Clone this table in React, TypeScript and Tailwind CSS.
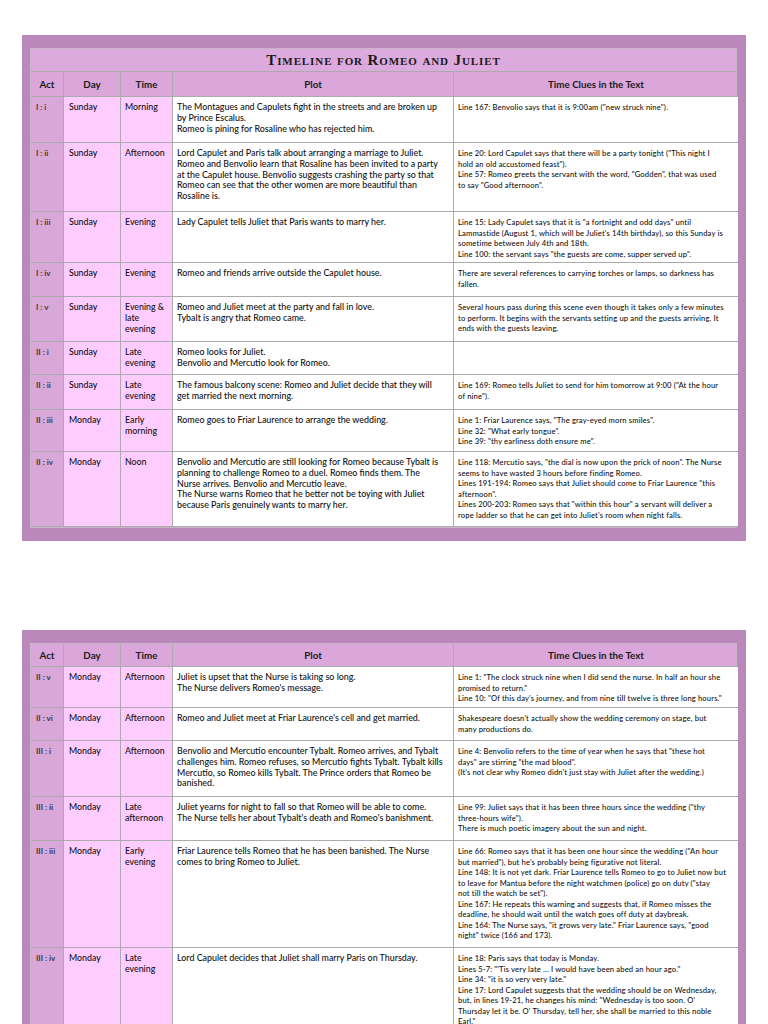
type Row = {
  act: string
  day: string
  time: string[]
  plot: string[]
  clues: string[]
  h: string
}

const pageOne: Row[] = [
  {
    act: "I : i",
    day: "Sunday",
    time: ["Morning"],
    plot: [
      "The Montagues and Capulets fight in the streets and are broken up",
      "by Prince Escalus.",
      "Romeo is pining for Rosaline who has rejected him.",
    ],
    clues: ['Line 167: Benvolio says that it is 9:00am ("new struck nine").'],
    h: "h-[46px]",
  },
  {
    act: "I : ii",
    day: "Sunday",
    time: ["Afternoon"],
    plot: [
      "Lord Capulet and Paris talk about arranging a marriage to Juliet.",
      "Romeo and Benvolio learn that Rosaline has been invited to a party",
      "at the Capulet house. Benvolio suggests crashing the party so that",
      "Romeo can see that the other women are more beautiful than",
      "Rosaline is.",
    ],
    clues: [
      'Line 20: Lord Capulet says that there will be a party tonight ("This night I',
      'hold an old accustomed feast").',
      'Line 57: Romeo greets the servant with the word, "Godden", that was used',
      'to say "Good afternoon".',
    ],
    h: "h-[69px]",
  },
  {
    act: "I : iii",
    day: "Sunday",
    time: ["Evening"],
    plot: ["Lady Capulet tells Juliet that Paris wants to marry her."],
    clues: [
      'Line 15: Lady Capulet says that it is "a fortnight and odd days" until',
      "Lammastide (August 1, which will be Juliet's 14th birthday), so this Sunday is",
      "sometime between July 4th and 18th.",
      'Line 100: the servant says "the guests are come, supper served up".',
    ],
    h: "h-[51px]",
  },
  {
    act: "I : iv",
    day: "Sunday",
    time: ["Evening"],
    plot: ["Romeo and friends arrive outside the Capulet house."],
    clues: [
      "There are several references to carrying torches or lamps, so darkness has",
      "fallen.",
    ],
    h: "h-[34px]",
  },
  {
    act: "I : v",
    day: "Sunday",
    time: ["Evening &", "late", "evening"],
    plot: [
      "Romeo and Juliet meet at the party and fall in love.",
      "Tybalt is angry that Romeo came.",
    ],
    clues: [
      "Several hours pass during this scene even though it takes only a few minutes",
      "to perform. It begins with the servants setting up and the guests arriving. It",
      "ends with the guests leaving.",
    ],
    h: "h-[45px]",
  },
  {
    act: "II : i",
    day: "Sunday",
    time: ["Late", "evening"],
    plot: ["Romeo looks for Juliet.", "Benvolio and Mercutio look for Romeo."],
    clues: [],
    h: "h-[33px]",
  },
  {
    act: "II : ii",
    day: "Sunday",
    time: ["Late", "evening"],
    plot: [
      "The famous balcony scene: Romeo and Juliet decide that they will",
      "get married the next morning.",
    ],
    clues: [
      'Line 169: Romeo tells Juliet to send for him tomorrow at 9:00 ("At the hour',
      'of nine").',
    ],
    h: "h-[35px]",
  },
  {
    act: "II : iii",
    day: "Monday",
    time: ["Early", "morning"],
    plot: ["Romeo goes to Friar Laurence to arrange the wedding."],
    clues: [
      'Line 1: Friar Laurence says, "The gray-eyed morn smiles".',
      'Line 32: "What early tongue".',
      'Line 39: "thy earliness doth ensure me".',
    ],
    h: "h-[42px]",
  },
  {
    act: "II : iv",
    day: "Monday",
    time: ["Noon"],
    plot: [
      "Benvolio and Mercutio are still looking for Romeo because Tybalt is",
      "planning to challenge Romeo to a duel. Romeo finds them. The",
      "Nurse arrives. Benvolio and Mercutio leave.",
      "The Nurse warns Romeo that he better not be toying with Juliet",
      "because Paris genuinely wants to marry her.",
    ],
    clues: [
      'Line 118: Mercutio says, "the dial is now upon the prick of noon". The Nurse',
      "seems to have wasted 3 hours before finding Romeo.",
      'Lines 191-194: Romeo says that Juliet should come to Friar Laurence "this',
      'afternoon".',
      'Lines 200-203: Romeo says that "within this hour" a servant will deliver a',
      "rope ladder so that he can get into Juliet's room when night falls.",
    ],
    h: "h-[75px]",
  },
]

const pageTwo: Row[] = [
  {
    act: "II : v",
    day: "Monday",
    time: ["Afternoon"],
    plot: [
      "Juliet is upset that the Nurse is taking so long.",
      "The Nurse delivers Romeo's message.",
    ],
    clues: [
      'Line 1: "The clock struck nine when I did send the nurse. In half an hour she',
      'promised to return."',
      'Line 10: "Of this day\'s journey, and from nine till twelve is three long hours."',
    ],
    h: "h-[41px]",
  },
  {
    act: "II : vi",
    day: "Monday",
    time: ["Afternoon"],
    plot: ["Romeo and Juliet meet at Friar Laurence's cell and get married."],
    clues: [
      "Shakespeare doesn't actually show the wedding ceremony on stage, but",
      "many productions do.",
    ],
    h: "h-[33px]",
  },
  {
    act: "III : i",
    day: "Monday",
    time: ["Afternoon"],
    plot: [
      "Benvolio and Mercutio encounter Tybalt. Romeo arrives, and Tybalt",
      "challenges him. Romeo refuses, so Mercutio fights Tybalt. Tybalt kills",
      "Mercutio, so Romeo kills Tybalt. The Prince orders that Romeo be",
      "banished.",
    ],
    clues: [
      'Line 4: Benvolio refers to the time of year when he says that "these hot',
      'days" are stirring "the mad blood".',
      "(It's not clear why Romeo didn't just stay with Juliet after the wedding.)",
    ],
    h: "h-[56px]",
  },
  {
    act: "III : ii",
    day: "Monday",
    time: ["Late", "afternoon"],
    plot: [
      "Juliet yearns for night to fall so that Romeo will be able to come.",
      "The Nurse tells her about Tybalt's death and Romeo's banishment.",
    ],
    clues: [
      'Line 99: Juliet says that it has been three hours since the wedding ("thy',
      'three-hours wife").',
      "There is much poetic imagery about the sun and night.",
    ],
    h: "h-[44px]",
  },
  {
    act: "III : iii",
    day: "Monday",
    time: ["Early", "evening"],
    plot: [
      "Friar Laurence tells Romeo that he has been banished. The Nurse",
      "comes to bring Romeo to Juliet.",
    ],
    clues: [
      'Line 66: Romeo says that it has been one hour since the wedding ("An hour',
      'but married"), but he\'s probably being figurative not literal.',
      "Line 148: It is not yet dark. Friar Laurence tells Romeo to go to Juliet now but",
      'to leave for Mantua before the night watchmen (police) go on duty ("stay',
      'not till the watch be set").',
      "Line 167: He repeats this warning and suggests that, if Romeo misses the",
      "deadline, he should wait until the watch goes off duty at daybreak.",
      'Line 164: The Nurse says, "it grows very late." Friar Laurence says, "good',
      'night" twice (166 and 173).',
    ],
    h: "h-[107px]",
  },
  {
    act: "III : iv",
    day: "Monday",
    time: ["Late", "evening"],
    plot: ["Lord Capulet decides that Juliet shall marry Paris on Thursday."],
    clues: [
      "Line 18: Paris says that today is Monday.",
      "Lines 5-7: \"'Tis very late ... I would have been abed an hour ago.\"",
      'Line 34: "it is so very very late."',
      "Line 17: Lord Capulet suggests that the wedding should be on Wednesday,",
      'but, in lines 19-21, he changes his mind: "Wednesday is too soon. O\'',
      "Thursday let it be. O' Thursday, tell her, she shall be married to this noble",
      'Earl."',
    ],
    h: "h-[110px]",
  },
]

const cols = "grid grid-cols-[33px_57px_52px_281px_284px]"
const line = "border-r border-b border-[#ababab]"

function Lines({ items, className }: { items: string[]; className: string }) {
  return (
    <div className={className}>
      {items.map((t, i) => (
        <div key={i} className="whitespace-nowrap">
          {t}
        </div>
      ))}
    </div>
  )
}

function HeaderRow({ h }: { h: string }) {
  return (
    <div className={`${cols} ${h} bg-[#dba7db] text-[9.8px] font-bold text-[#1a1a1a]`}>
      {["Act", "Day", "Time", "Plot", "Time Clues in the Text"].map((t, i) => (
        <div key={t} className={`${line} ${i === 4 ? "border-r-0" : ""} flex items-center justify-center`}>
          {t}
        </div>
      ))}
    </div>
  )
}

function BodyRow({ row }: { row: Row }) {
  return (
    <div className={`${cols} ${row.h} text-[#111]`}>
      <div className={`${line} bg-[#d9a8d9] pl-[5px] pt-[5px] text-[8px] font-bold text-[#3a3a3a] leading-[10.8px]`}>
        {row.act}
      </div>
      <div className={`${line} bg-[#ffccff] pl-[5px] pt-[5px] text-[8.8px] font-medium leading-[10.8px]`}>{row.day}</div>
      <Lines
        items={row.time}
        className={`${line} bg-[#ffccff] pl-[4px] pt-[5px] text-[8.8px] font-medium leading-[10.8px]`}
      />
      <Lines
        items={row.plot}
        className={`${line} bg-white pl-[4px] pt-[5px] text-[8.9px] font-medium leading-[10.8px]`}
      />
      <Lines
        items={row.clues}
        className="border-b border-[#ababab] bg-white pl-[4px] pt-[5px] text-[7.6px] font-medium leading-[10.5px] tracking-[0.15px]"
      />
    </div>
  )
}

function Panel({ rows, title, pad, headH }: { rows: Row[]; title?: boolean; pad: string; headH: string }) {
  return (
    <div className={`bg-[#bb88bb] pl-[8px] pr-[9px] pt-[13px] ${pad}`}>
      <div className="border border-[#c9b4c9] bg-white">
        {title && (
          <div className="flex h-[23px] items-center justify-center border-b border-[#ababab] bg-[#dcaadc]">
            <span
              className="text-[15px] font-bold tracking-[0.9px] text-[#1a1a1a] [font-variant:small-caps]"
              style={{ fontFamily: '"Liberation Serif", serif' }}
            >
              Timeline for Romeo and Juliet
            </span>
          </div>
        )}
        <HeaderRow h={headH} />
        {rows.map((r) => (
          <BodyRow key={r.act} row={r} />
        ))}
      </div>
    </div>
  )
}

export default function App() {
  return (
    <div
      className="min-h-[1024px] bg-white px-[22px] pt-[35px]"
      style={{ fontFamily: 'Lato, "Liberation Sans", Arial, sans-serif' }}
    >
      <Panel rows={pageOne} title pad="pb-[13px]" headH="h-[25px]" />
      <div className="h-[89px]" />
      <Panel rows={pageTwo} pad="pb-0" headH="h-[23px]" />
    </div>
  )
}
